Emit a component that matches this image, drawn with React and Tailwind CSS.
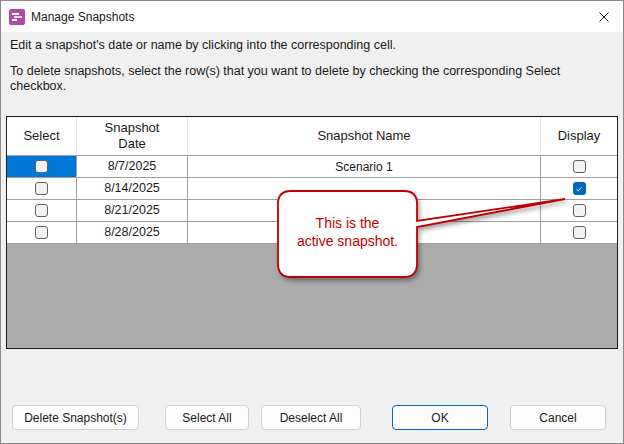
const rows = [
  { date: '8/7/2025', name: 'Scenario 1', display: false, sel: true },
  { date: '8/14/2025', name: '', display: true },
  { date: '8/21/2025', name: '', display: false },
  { date: '8/28/2025', name: '', display: false },
];

function Box({ checked }) {
  return checked ? (
    <span className="inline-flex h-[13px] w-[13px] items-center justify-center rounded-[3px] bg-[#0067c0]">
      <svg width="8" height="8" viewBox="0 0 8 8"><path d="M1.5 4.2l1.7 1.6 3.3-3.6" fill="none" stroke="white" strokeWidth="0.9" /></svg>
    </span>
  ) : (
    <span className="inline-block h-[13px] w-[13px] rounded-[3px] border border-[#616161] bg-[#f3f3f3]" />
  );
}

function Btn({ children, w, primary }) {
  return (
    <button className={`h-[25px] ${w} rounded-[4px] border ${primary ? 'border-[#0067c0]' : 'border-[#d0d0d0]'} bg-[#fdfdfd] text-[12px] text-[#1a1a1a]`}>
      {children}
    </button>
  );
}

export default function App() {
  return (
    <div className="relative flex h-[444px] w-[624px] flex-col overflow-hidden border border-[#8a8a8a] bg-[#f0f0f0] text-[12px] text-[#1a1a1a]" style={{ fontFamily: '"Segoe UI", "Liberation Sans", Arial, sans-serif' }}>
      <div className="flex h-[31px] items-center bg-white pl-[8px] pr-[14px]">
        <svg width="16" height="16" viewBox="0 0 16 16" className="mr-[6px]">
          <rect width="16" height="16" rx="2" fill="#b04aa8" />
          <rect x="3" y="4" width="7" height="2" fill="#fff" />
          <rect x="5" y="7" width="8" height="2" fill="#f2d0ee" />
          <rect x="3" y="10" width="5" height="2" fill="#fff" />
        </svg>
        <span className="text-[12px]">Manage Snapshots</span>
        <svg width="10" height="10" viewBox="0 0 10 10" className="ml-auto"><path d="M0.5 0.5l9 9M9.5 0.5l-9 9" stroke="#222" strokeWidth="1" /></svg>
      </div>
      <div className="max-w-[600px] px-[9px] pt-[6px] text-[12.5px] leading-[15px]">
        <p>Edit a snapshot's date or name by clicking into the corresponding cell.</p>
        <p className="mt-[11px]">To delete snapshots, select the row(s) that you want to delete by checking the corresponding Select checkbox.</p>
      </div>
      <div className="mx-[5px] mt-[22px] h-[233px] border border-[#1a1a1a] bg-[#ababab]">
        <div className="grid grid-cols-[70px_111px_353px_1fr] bg-white text-[13px]">
          {['Select', 'Snapshot Date', 'Snapshot Name', 'Display'].map((h, i) => (
            <div key={h} className={`flex h-[39px] items-center justify-center border-b border-[#a0a0a0] text-center leading-[16px] ${i < 3 ? 'border-r border-r-[#e4e4e4]' : ''} ${i === 1 ? 'px-[18px]' : ''}`}>{h}</div>
          ))}
          {rows.map((r) => [
            <div key={r.date + 'a'} className={`flex h-[22px] items-center justify-center border-b border-r border-[#a0a0a0] ${r.sel ? 'bg-[#0078d7]' : ''}`}><Box /></div>,
            <div key={r.date + 'b'} className="flex h-[22px] items-center justify-center border-b border-r border-[#a0a0a0] text-[12.5px]">{r.date}</div>,
            <div key={r.date + 'c'} className="flex h-[22px] items-center justify-center border-b border-r border-[#a0a0a0] text-[12px]">{r.name}</div>,
            <div key={r.date + 'd'} className="flex h-[22px] items-center justify-center border-b border-[#a0a0a0]"><Box checked={r.display} /></div>,
          ])}
        </div>
      </div>
      <div className="mt-auto mb-[13px] flex items-center pl-[11px]">
        <Btn w="w-[127px]">Delete Snapshot(s)</Btn>
        <div className="ml-[26px]"><Btn w="w-[84px]">Select All</Btn></div>
        <div className="ml-[12px]"><Btn w="w-[100px]">Deselect All</Btn></div>
        <div className="ml-[31px]"><Btn w="w-[96px]" primary>OK</Btn></div>
        <div className="ml-[22px]"><Btn w="w-[96px]">Cancel</Btn></div>
      </div>
      <svg className="absolute left-0 top-0" width="624" height="444">
        <defs>
          <filter id="sh" x="-20%" y="-20%" width="140%" height="140%"><feDropShadow dx="2" dy="3" stdDeviation="2" floodOpacity="0.35" /></filter>
        </defs>
        <path d="M290 190 H403 Q416 190 416 203 V220 L564 198 L416 226 V263 Q416 276 403 276 H290 Q277 276 277 263 V203 Q277 190 290 190 Z" fill="white" stroke="#c00000" strokeWidth="1.8" filter="url(#sh)" />
      </svg>
      <div className="absolute left-[277px] top-[213px] w-[139px] text-center text-[14px] leading-[18px] text-[#c00000]">This is the<br />active snapshot.</div>
    </div>
  );
}
